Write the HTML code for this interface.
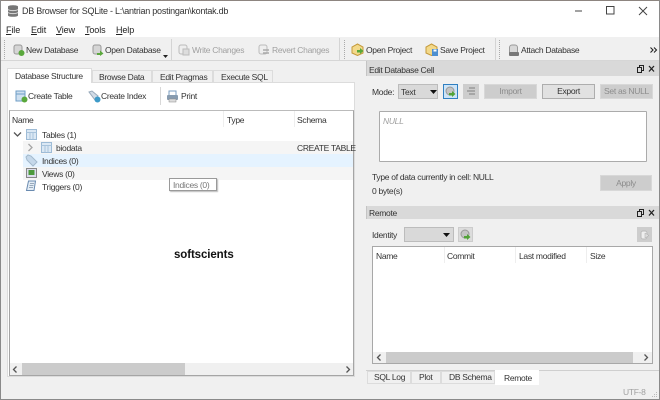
<!DOCTYPE html>
<html><head><meta charset="utf-8">
<style>
html,body{margin:0;padding:0;width:660px;height:400px;overflow:hidden;background:#f0f0f0}
body{position:relative;font-family:"Liberation Sans",sans-serif;font-size:8.5px;letter-spacing:-.3px;color:#222}
.t,.b,svg{position:absolute}
.t{white-space:nowrap;line-height:12px;height:12px}
.g{color:#a0a0a0}
.btn{background:#cdcdcd;border:1px solid #d8d8d8;box-sizing:border-box;text-align:center;color:#8c8c8c;line-height:13px;white-space:nowrap}
u{text-decoration:underline}
</style></head><body>
<div class="b" style="left:0;top:0;width:660px;height:38px;background:#fff"></div>
<div class="b" style="left:0;top:0;width:660px;height:1px;background:#8d8580"></div>
<div class="b" style="left:0;top:0;width:1px;height:400px;background:#8a8a8a"></div>
<div class="b" style="left:659px;top:0;width:1px;height:400px;background:#8a8a8a"></div>
<div class="b" style="left:0;top:399px;width:660px;height:1px;background:#8a8a8a"></div>
<svg style="left:7px;top:4px" width="12" height="14" viewBox="0 0 12 14"><path d="M1 2.500C1 .8 11 .8 11 2.500V11.500C11 13.200 1 13.200 1 11.500Z" fill="#777"/><path d="M1 5.500C3 7 9 7 11 5.500M1 8.500C3 10 9 10 11 8.500" stroke="#ddd" fill="none"/></svg>
<div class="t" style="left:22px;top:5px;font-size:9px;letter-spacing:-.25px;color:#333">DB Browser for SQLite - L:\antrian postingan\kontak.db</div>
<svg style="left:570px;top:3px" width="85" height="16" viewBox="0 0 85 16" fill="none" stroke="#444"><path d="M5 8H12" stroke-width="1"/><path d="M36.500 3.500H44V11H36.500Z"/><path d="M69 4L77 12M77 4L69 12"/></svg>

<div class="t" style="left:6px;top:24px;font-size:9px;letter-spacing:-.1px"><u>F</u>ile</div>
<div class="t" style="left:31px;top:24px;font-size:9px;letter-spacing:-.1px"><u>E</u>dit</div>
<div class="t" style="left:56px;top:24px;font-size:9px;letter-spacing:-.1px"><u>V</u>iew</div>
<div class="t" style="left:85px;top:24px;font-size:9px;letter-spacing:-.1px"><u>T</u>ools</div>
<div class="t" style="left:116px;top:24px;font-size:9px;letter-spacing:-.1px"><u>H</u>elp</div>

<div class="b" style="left:1px;top:37px;width:658px;height:23px;background:#f0f0f0;border-bottom:1px solid #d6d6d6"></div>
<div class="b" style="left:4px;top:40px;width:1px;height:19px;border-left:1px dotted #aaa"></div>
<div class="b" style="left:171px;top:39px;width:1px;height:21px;background:#d4d4d4"></div>
<div class="b" style="left:339px;top:38px;width:1px;height:22px;background:#d4d4d4"></div>
<div class="b" style="left:344px;top:40px;width:1px;height:19px;border-left:1px dotted #aaa"></div>
<div class="b" style="left:495px;top:38px;width:1px;height:22px;background:#d4d4d4"></div>
<div class="b" style="left:499px;top:40px;width:1px;height:19px;border-left:1px dotted #aaa"></div>

<svg style="left:13px;top:44px" width="12" height="12"><rect x="1" y="1" width="8" height="9" rx="2" fill="#d5d5d5" stroke="#999"/><circle cx="8.500" cy="9" r="3" fill="#5aa83c"/></svg>
<div class="t" style="left:26px;top:44px;color:#333">New Database</div>
<svg style="left:92px;top:44px" width="12" height="12"><rect x="1" y="1" width="8" height="9" rx="2" fill="#d5d5d5" stroke="#999"/><path d="M5 9H8V6.500L11.500 9.500L8 12V11H5Z" fill="#5aa83c"/></svg>
<div class="t" style="left:105px;top:44px;color:#333">Open Database</div>
<svg style="left:163px;top:55px" width="5" height="3"><path d="M0 0H5L2.500 3Z" fill="#222"/></svg>
<svg style="left:178px;top:44px" width="12" height="12"><rect x="1" y="1" width="8" height="9" rx="2" fill="#eee" stroke="#bbb"/><rect x="5" y="5" width="6" height="6" fill="#ddd" stroke="#bbb"/></svg>
<div class="t g" style="left:192px;top:44px">Write Changes</div>
<svg style="left:258px;top:44px" width="12" height="12"><rect x="1" y="1" width="8" height="9" rx="2" fill="#eee" stroke="#bbb"/><path d="M5 6H11M5 9H11" stroke="#aaa" stroke-width="1.500"/></svg>
<div class="t g" style="left:272px;top:44px">Revert Changes</div>
<svg style="left:351px;top:43px" width="13" height="13"><path d="M6.500 1L12 4V10L6.500 12.500L1 10V4Z" fill="#f3d98a" stroke="#c49a3c"/><path d="M6 7H9V5L12.500 8L9 11V9.500H6Z" fill="#59a83a"/></svg>
<div class="t" style="left:366px;top:44px;color:#333">Open Project</div>
<svg style="left:425px;top:43px" width="14" height="13"><path d="M6.500 1L12 4V10L6.500 12.500L1 10V4Z" fill="#f3d98a" stroke="#c49a3c"/><rect x="7" y="6" width="6" height="7" fill="#4d8fd0"/><rect x="8.500" y="6.500" width="3" height="2" fill="#fff"/></svg>
<div class="t" style="left:440px;top:44px;color:#333">Save Project</div>
<svg style="left:508px;top:44px" width="12" height="13"><rect x="1.500" y="1" width="8" height="10" rx="2.500" fill="#d8d8d8" stroke="#999"/><rect x="1" y="8" width="10" height="4" rx="1" fill="#777"/></svg>
<div class="t" style="left:521px;top:44px;color:#333">Attach Database</div>
<svg style="left:650px;top:47px" width="8" height="6" fill="none" stroke="#222" stroke-width="1.100"><path d="M.5 .5L3 3L.5 5.500M4 .5L6.500 3L4 5.500"/></svg>

<!-- left tabs -->
<div class="b" style="left:7px;top:82px;width:348px;height:295px;background:#fff;border:1px solid #dcdcdc;box-sizing:border-box"></div>
<div class="b" style="left:92px;top:70px;width:60px;height:13px;background:#f0f0f0;border:1px solid #dcdcdc;box-sizing:border-box"></div>
<div class="b" style="left:152px;top:70px;width:61px;height:13px;background:#f0f0f0;border:1px solid #dcdcdc;box-sizing:border-box"></div>
<div class="b" style="left:213px;top:70px;width:60px;height:13px;background:#f0f0f0;border:1px solid #dcdcdc;box-sizing:border-box"></div>
<div class="b" style="left:7px;top:68px;width:85px;height:15px;background:#fff;border:1px solid #dcdcdc;border-bottom:0;box-sizing:border-box"></div>
<div class="t" style="left:15px;top:70px;color:#333">Database Structure</div>
<div class="t" style="left:99px;top:71px;color:#333">Browse Data</div>
<div class="t" style="left:160px;top:71px;color:#333">Edit Pragmas</div>
<div class="t" style="left:221px;top:71px;color:#333">Execute SQL</div>

<svg style="left:15px;top:90px" width="13" height="13"><rect x="1" y="1" width="9" height="10" fill="#cfe0f0" stroke="#6f9ec6"/><path d="M1 4H10" stroke="#6f9ec6"/><circle cx="9.500" cy="9.500" r="3" fill="#5aa83c"/></svg>
<div class="t" style="left:28px;top:90px;color:#333">Create Table</div>
<svg style="left:88px;top:90px" width="13" height="13"><path d="M1 2L4 1L10 6L7 10Z" fill="#d0dbe6" stroke="#9ab"/><circle cx="9.500" cy="9.500" r="3" fill="#3d9ac8"/></svg>
<div class="t" style="left:101px;top:90px;color:#333">Create Index</div>
<div class="b" style="left:160px;top:87px;width:1px;height:18px;background:#d8d8d8"></div>
<svg style="left:166px;top:90px" width="13" height="13"><rect x="3" y="1" width="7" height="5" fill="#fff" stroke="#7a9cc0"/><rect x="1" y="5" width="11" height="5" rx="1" fill="#889cb0"/><rect x="3" y="9" width="7" height="3" fill="#ddd" stroke="#888" stroke-width=".5"/></svg>
<div class="t" style="left:181px;top:90px;color:#333">Print</div>

<!-- tree -->
<div class="b" style="left:9px;top:110px;width:345px;height:266px;background:#fff;border:1px solid #a5a5a5;box-sizing:border-box;border-top-color:#bbb"></div>
<div class="b" style="left:223px;top:111px;width:1px;height:16px;background:#eee"></div>
<div class="b" style="left:294px;top:111px;width:1px;height:16px;background:#eee"></div>
<div class="t" style="left:12px;top:114px;color:#333">Name</div>
<div class="t" style="left:227px;top:114px;color:#333">Type</div>
<div class="t" style="left:297px;top:114px;color:#333">Schema</div>
<div class="b" style="left:23px;top:141px;width:330px;height:13px;background:#f5f5f5"></div>
<div class="b" style="left:23px;top:154px;width:330px;height:13px;background:#e5f3ff"></div>
<div class="b" style="left:23px;top:167px;width:330px;height:13px;background:#f5f5f5"></div>
<svg style="left:13px;top:131px" width="9" height="7"><path d="M1 1.500L4.500 5L8 1.500" fill="none" stroke="#555" stroke-width="1.300"/></svg>
<svg style="left:27px;top:143px" width="7" height="9"><path d="M1.500 1L5 4.500L1.500 8" fill="none" stroke="#a6a6a6" stroke-width="1.300"/></svg>
<svg style="left:26px;top:129px" width="11" height="11"><rect x=".5" y=".5" width="10" height="10" fill="#dbe8f4" stroke="#9dbbd6"/><path d="M.5 3.500H10.500M4 3.500V10.500M7 3.500V10.500" stroke="#a9c4dc"/></svg>
<svg style="left:41px;top:142px" width="11" height="11"><rect x=".5" y=".5" width="10" height="10" fill="#dbe8f4" stroke="#9dbbd6"/><path d="M.5 3.500H10.500M4 3.500V10.500M7 3.500V10.500" stroke="#a9c4dc"/></svg>
<svg style="left:25px;top:154px" width="13" height="13"><path d="M1 3L3 1L6 2L12 8L8 12L2 6Z" fill="#c5d8ea" stroke="#a3b9cc"/></svg>
<svg style="left:26px;top:168px" width="11" height="10"><rect x=".5" y=".5" width="10" height="9" fill="#dde" stroke="#888"/><rect x="2.500" y="2" width="6" height="5" fill="#4c9a3c"/></svg>
<svg style="left:25px;top:180px" width="12" height="13"><path d="M3.500 1H10.500L9 10.500H1.500Z" fill="#e4edf6" stroke="#6a8bb0"/><path d="M5 3.500H9M4.500 5.500H8.500M4 7.500H8" stroke="#9ab"/></svg>
<div class="t" style="left:42px;top:129px;color:#333">Tables (1)</div>
<div class="t" style="left:56px;top:142px;color:#333">biodata</div>
<div class="t" style="left:297px;top:142px;color:#333">CREATE TABLE</div>
<div class="t" style="left:42px;top:155px;color:#333">Indices (0)</div>
<div class="t" style="left:42px;top:168px;color:#333">Views (0)</div>
<div class="t" style="left:42px;top:181px;color:#333">Triggers (0)</div>
<div class="b" style="left:169px;top:178px;width:48px;height:13px;background:#fff;border:1px solid #9a9a9a;box-sizing:border-box;box-shadow:1px 1px 1px #bbb"></div>
<div class="t" style="left:173px;top:179px;color:#777">Indices (0)</div>
<div class="t" style="left:174px;top:249px;font-size:11.500px;letter-spacing:-.1px;font-weight:bold;color:#111">softscients</div>
<div class="b" style="left:10px;top:363px;width:343px;height:12px;background:#f0f0f0"></div>
<div class="b" style="left:22px;top:363px;width:163px;height:12px;background:#cbcbcb"></div>
<svg style="left:12px;top:366px" width="6" height="7" fill="none" stroke="#555" stroke-width="1.300"><path d="M4.500 .5L1.500 3.500L4.500 6.500"/></svg>
<svg style="left:345px;top:366px" width="6" height="7" fill="none" stroke="#555" stroke-width="1.300"><path d="M1.500 .5L4.500 3.500L1.500 6.500"/></svg>

<!-- right -->
<div class="b" style="left:366px;top:61px;width:293px;height:15px;background:#d9d9d9;border-left:1px solid #c4c4c4;box-sizing:border-box"></div>
<div class="t" style="left:369px;top:64px;color:#333">Edit Database Cell</div>
<svg style="left:637px;top:65px" width="18" height="8" fill="none" stroke="#222"><path d="M.5 2.500H4.500V7.500H.5ZM2.500 2.500V.5H6.500V5.500H4.500"/><path d="M12 1L17 6.500M17 1L12 6.500" stroke-width="1.300"/></svg>
<div class="t" style="left:372px;top:86px;color:#333">Mode:</div>
<div class="b" style="left:398px;top:84px;width:40px;height:15px;background:#d9d9d9;border:1px solid #bcbcbc;box-sizing:border-box"></div>
<div class="t" style="left:401px;top:86px;color:#333">Text</div>
<svg style="left:430px;top:90px" width="7" height="4"><path d="M0 0H7L3.500 4Z" fill="#111"/></svg>
<div class="b" style="left:443px;top:84px;width:15px;height:15px;background:#cde4f7;border:1px solid #2f7fc1;box-sizing:border-box"></div>
<svg style="left:445px;top:86px" width="12" height="12"><circle cx="5" cy="5" r="4" fill="#c4c4c4" stroke="#999"/><path d="M4 7H7V5L10.500 8L7 11V9.500H4Z" fill="#52a338"/></svg>
<div class="b" style="left:463px;top:84px;width:16px;height:15px;background:#cdcdcd"></div>
<svg style="left:466px;top:87px" width="10" height="9"><path d="M3 1H9M1 4H9M3 7H9" stroke="#999" stroke-width="1.500"/></svg>
<div class="b btn" style="left:484px;top:84px;width:53px;height:15px">Import</div>
<div class="b btn" style="left:542px;top:84px;width:53px;height:15px;background:#e1e1e1;border-color:#adadad;color:#333">Export</div>
<div class="b btn" style="left:600px;top:84px;width:53px;height:15px">Set as NULL</div>
<div class="b" style="left:379px;top:111px;width:268px;height:51px;background:#fff;border:1px solid #ababab;box-sizing:border-box;border-radius:1px"></div>
<div class="t" style="left:383px;top:115px;font-style:italic;color:#a0a0a0">NULL</div>
<div class="t" style="left:372px;top:171px;color:#333">Type of data currently in cell: NULL</div>
<div class="t" style="left:372px;top:185px;color:#333">0 byte(s)</div>
<div class="b btn" style="left:600px;top:175px;width:52px;height:16px;line-height:14px">Apply</div>

<div class="b" style="left:366px;top:206px;width:293px;height:13px;background:#d9d9d9;border-left:1px solid #c4c4c4;box-sizing:border-box"></div>
<div class="t" style="left:369px;top:207px;color:#333">Remote</div>
<svg style="left:637px;top:209px" width="18" height="8" fill="none" stroke="#222"><path d="M.5 2.500H4.500V7.500H.5ZM2.500 2.500V.5H6.500V5.500H4.500"/><path d="M12 1L17 6.500M17 1L12 6.500" stroke-width="1.300"/></svg>
<div class="t" style="left:372px;top:229px;color:#333">Identity</div>
<div class="b" style="left:404px;top:227px;width:50px;height:15px;background:#d9d9d9;border:1px solid #bcbcbc;box-sizing:border-box"></div>
<svg style="left:443px;top:233px" width="7" height="4"><path d="M0 0H7L3.500 4Z" fill="#111"/></svg>
<div class="b" style="left:458px;top:227px;width:15px;height:15px;background:#dcdcdc;border:1px solid #ccc;box-sizing:border-box"></div>
<svg style="left:460px;top:229px" width="12" height="12"><circle cx="5" cy="5" r="4" fill="#c4c4c4" stroke="#999"/><path d="M4 7H7V5L10.500 8L7 11V9.500H4Z" fill="#52a338"/></svg>
<div class="b" style="left:637px;top:227px;width:15px;height:15px;background:#cdcdcd"></div>
<svg style="left:640px;top:230px" width="10" height="10"><rect x="1" y="1" width="6" height="8" rx="2" fill="#eee" stroke="#bbb"/><path d="M5 3L9 5.500L5 8Z" fill="#ddd" stroke="#aaa" stroke-width=".5"/></svg>

<div class="b" style="left:372px;top:246px;width:281px;height:118px;background:#fff;border:1px solid #a8a8a8;box-sizing:border-box"></div>
<div class="b" style="left:444px;top:247px;width:1px;height:16px;background:#eee"></div>
<div class="b" style="left:515px;top:247px;width:1px;height:16px;background:#eee"></div>
<div class="b" style="left:586px;top:247px;width:1px;height:16px;background:#eee"></div>
<div class="t" style="left:376px;top:250px;color:#333">Name</div>
<div class="t" style="left:447px;top:250px;color:#333">Commit</div>
<div class="t" style="left:519px;top:250px;color:#333">Last modified</div>
<div class="t" style="left:590px;top:250px;color:#333">Size</div>
<div class="b" style="left:373px;top:352px;width:279px;height:11px;background:#f0f0f0"></div>
<div class="b" style="left:386px;top:352px;width:247px;height:11px;background:#cbcbcb"></div>
<svg style="left:376px;top:354px" width="6" height="7" fill="none" stroke="#555" stroke-width="1.300"><path d="M4.500 .5L1.500 3.500L4.500 6.500"/></svg>
<svg style="left:643px;top:354px" width="6" height="7" fill="none" stroke="#555" stroke-width="1.300"><path d="M1.500 .5L4.500 3.500L1.500 6.500"/></svg>

<div class="b" style="left:366px;top:370px;width:293px;height:1px;background:#cfcfcf"></div>
<div class="b" style="left:367px;top:371px;width:44px;height:13px;border:1px solid #dcdcdc;box-sizing:border-box"></div>
<div class="b" style="left:411px;top:371px;width:30px;height:13px;border:1px solid #dcdcdc;box-sizing:border-box"></div>
<div class="b" style="left:441px;top:371px;width:54px;height:13px;border:1px solid #dcdcdc;box-sizing:border-box"></div>
<div class="b" style="left:495px;top:370px;width:44px;height:15px;background:#fff"></div>
<div class="t" style="left:374px;top:371px;color:#333">SQL Log</div>
<div class="t" style="left:419px;top:371px;color:#333">Plot</div>
<div class="t" style="left:449px;top:371px;color:#333">DB Schema</div>
<div class="t" style="left:504px;top:372px;color:#333">Remote</div>
<div class="t" style="left:623px;top:386px;color:#a0a0a0">UTF-8</div>
<svg style="left:651px;top:391px" width="7" height="7"><path d="M5 1h1v1H5zM3 3h1v1H3zM5 3h1v1H5zM1 5h1v1H1zM3 5h1v1H3zM5 5h1v1H5z" fill="#bbb"/></svg>
</body></html>
